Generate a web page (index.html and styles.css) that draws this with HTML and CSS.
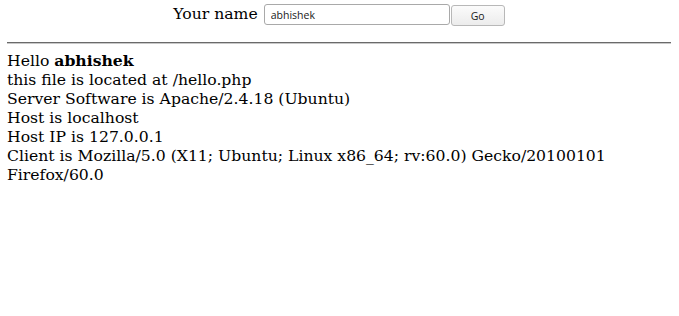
FILE: index.html
```html
<!DOCTYPE html>
<html>
<head>
<meta charset="utf-8">
<link rel="stylesheet" href="styles.css">
</head>
<body>
<form class="bar">
  <span class="label">Your name</span>
  <input class="field" type="text" value="abhishek">
  <button class="go" type="button">Go</button>
</form>
<hr class="rule">
<div class="info">
  <div>Hello <b>abhishek</b></div>
  <div>this file is located at /hello.php</div>
  <div>Server Software is Apache/2.4.18 (Ubuntu)</div>
  <div>Host is localhost</div>
  <div>Host IP is 127.0.0.1</div>
  <div>Client is Mozilla/5.0 (X11; Ubuntu; Linux x86_64; rv:60.0) Gecko/20100101 Firefox/60.0</div>
</div>
</body>
</html>
```
FILE: styles.css
```css
html, body {
  background: #ffffff;
}
body {
  margin: 0 8px 8px 7px;
  font-family: "DejaVu Serif", serif;
  font-size: 15.65px;
  line-height: 19px;
  color: #000000;
}
.bar {
  display: flex;
  justify-content: center;
  align-items: flex-start;
  margin: 0;
  padding-top: 4px;
  height: 22px;
}
.label {
  line-height: 19px;
  margin-right: 6px;
}
.field {
  box-sizing: border-box;
  width: 186px;
  height: 21px;
  margin: 0;
  padding: 0 6px;
  border: 1px solid #a9a9a9;
  border-radius: 3px;
  background: #ffffff;
  font-family: "Open Sans", sans-serif;
  font-size: 10.5px;
  color: #1a1a1a;
  outline: none;
}
.go {
  box-sizing: border-box;
  width: 54px;
  height: 21px;
  margin: 1px 0 0 1px;
  padding: 0;
  border: 1px solid #b8b8b8;
  border-radius: 3px;
  background: linear-gradient(#fbfbfb, #ececec);
  font-family: "Open Sans", sans-serif;
  font-size: 10.5px;
  color: #1a1a1a;
}
.rule {
  margin: 16px 0 7px 0;
  border: 0;
  border-top: 1px solid #6a6a6a;
  border-bottom: 1px solid #c8c8c8;
  height: 0;
}
.info b {
  font-weight: bold;
}
```
